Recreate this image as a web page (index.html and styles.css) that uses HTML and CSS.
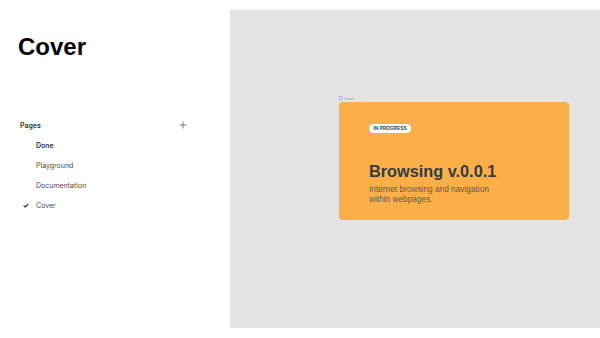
FILE: index.html
```html
<!DOCTYPE html>
<html lang="en">
<head>
<meta charset="utf-8">
<title>Cover</title>
<link rel="stylesheet" href="styles.css">
</head>
<body>
<div class="app">
  <aside class="sidebar">
    <h1 class="page-title">Cover</h1>
    <div class="pages-head">
      <span class="pages-label">Pages</span>
      <svg class="plus" width="8" height="8" viewBox="0 0 8 8"><path d="M4 0.5V7.5M0.5 4H7.5" stroke="#555" stroke-width="0.8" fill="none"/></svg>
    </div>
    <ul class="pages">
      <li class="page active-bold"><span class="check"></span><span>Done</span></li>
      <li class="page"><span class="check"></span><span>Playground</span></li>
      <li class="page"><span class="check"></span><span>Documentation</span></li>
      <li class="page"><span class="check"><svg width="6" height="5" viewBox="0 0 6 5"><path d="M0.6 2.6L2.2 4L5.4 0.8" stroke="#222" stroke-width="1.1" fill="none"/></svg></span><span>Cover</span></li>
    </ul>
  </aside>
  <main class="canvas">
    <div class="frame-label"><svg width="4" height="4" viewBox="0 0 4 4"><rect x="0.5" y="0.5" width="3" height="3" fill="none" stroke="#999" stroke-width="0.5"/></svg><span>Cover</span></div>
    <section class="card">
      <span class="badge">IN PROGRESS</span>
      <h2 class="card-title">Browsing v.0.0.1</h2>
      <p class="card-sub">Internet browsing and navigation<br>within webpages.</p>
    </section>
  </main>
</div>
</body>
</html>
```
FILE: styles.css
```css
html, body {
  margin: 0;
  padding: 0;
  background: #ffffff;
}
body {
  width: 600px;
  height: 338px;
  overflow: hidden;
  font-family: "Liberation Sans", Arial, sans-serif;
}
.app {
  display: flex;
  height: 338px;
}
.sidebar {
  width: 230px;
  flex: none;
}
.page-title {
  margin: 33px 0 0 18px;
  font-size: 24px;
  line-height: 28px;
  font-weight: 700;
  color: #000;
}
.pages-head {
  margin: 54px 0 0 20px;
  width: 167px;
  height: 20px;
  display: flex;
  align-items: center;
  justify-content: space-between;
}
.pages-label {
  font-family: Inter, "Noto Sans", sans-serif;
  font-size: 7px;
  font-weight: 600;
  color: #333;
}
.plus {
  display: block;
}
.pages {
  list-style: none;
  margin: 0;
  padding: 0;
}
.page {
  height: 20px;
  display: flex;
  align-items: center;
  padding-left: 22px;
  font-family: Inter, "Noto Sans", sans-serif;
  font-size: 7px;
  color: #4a4a4a;
}
.page.active-bold {
  font-weight: 600;
  color: #333;
}
.check {
  width: 14px;
  display: flex;
  align-items: center;
}
.check svg {
  display: block;
  margin-left: 1px;
}
.canvas {
  flex: 1;
  margin: 10px 0;
  background: #e4e4e4;
  padding: 85px 0 0 109px;
}
.frame-label {
  height: 6px;
  margin-bottom: 1px;
  display: flex;
  align-items: center;
  gap: 1px;
  font-size: 4px;
  color: #999;
}
.frame-label svg {
  display: block;
}
.card {
  height: 118px;
  box-sizing: border-box;
  width: 230px;
  padding: 22px 0 0 30px;
  background: #fcaf48;
  border-radius: 4px;
}
.badge {
  display: inline-block;
  height: 9px;
  line-height: 9px;
  width: 42px;
  box-sizing: border-box;
  text-align: center;
  background: #ffffff;
  border-radius: 5px;
  font-size: 4.8px;
  font-weight: 700;
  color: #333b44;
  vertical-align: top;
  white-space: nowrap;
}
.card-title {
  margin: 19.5px 0 0 0;
  font-size: 16.3px;
  line-height: 18px;
  font-weight: 700;
  color: #333b44;
}
.card-sub {
  margin: 5.5px 0 0 0;
  font-size: 8.3px;
  line-height: 9.5px;
  color: #5a5a5a;
}
```
